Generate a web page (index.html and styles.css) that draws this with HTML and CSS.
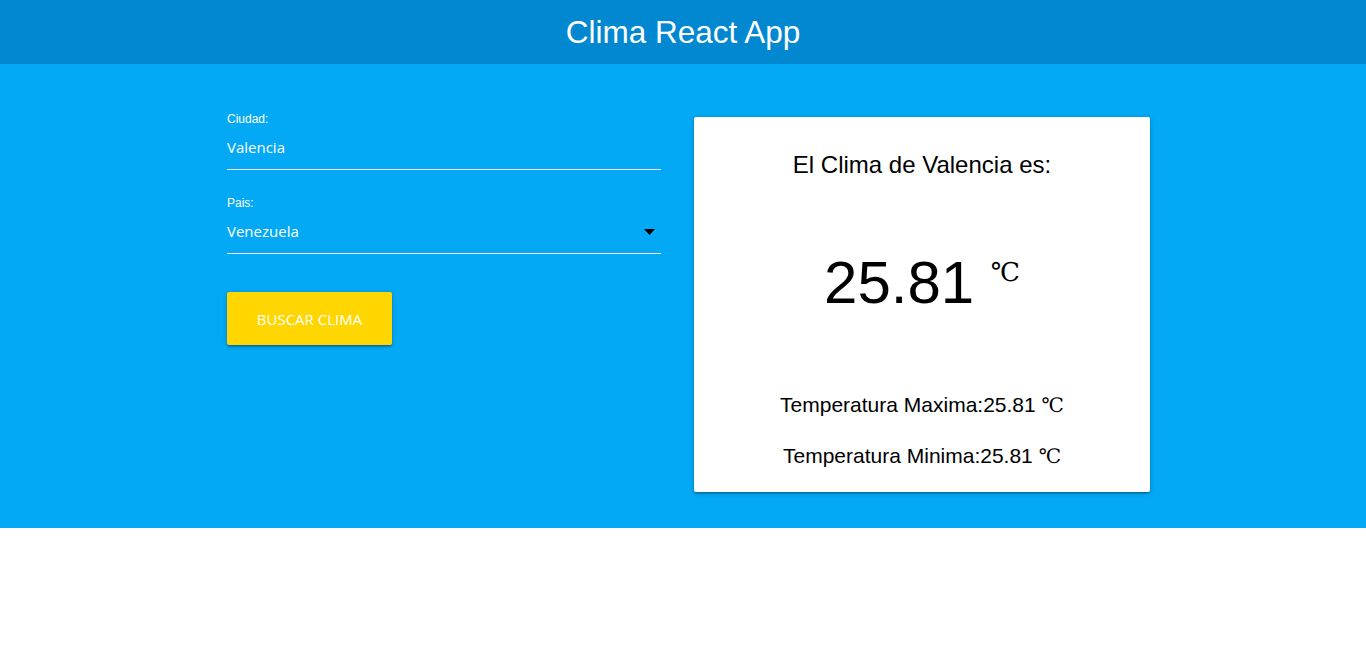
FILE: index.html
```html
<!DOCTYPE html>
<html lang="es">
<head>
<meta charset="utf-8">
<title>Clima React App</title>
<link rel="stylesheet" href="styles.css">
</head>
<body>
<header class="topbar">
  <h1 class="brand">Clima React App</h1>
</header>
<main class="hero">
  <div class="container">
    <div class="col col-form">
      <form class="form">
        <div class="field">
          <label class="field-label" for="ciudad">Ciudad:</label>
          <input class="field-input" id="ciudad" type="text" value="Valencia">
        </div>
        <div class="field">
          <span class="field-label">Pais:</span>
          <div class="field-input select">
            <span>Venezuela</span>
            <svg class="caret" width="11" height="6" viewBox="0 0 11 6"><path d="M0 0 L11 0 L5.5 6 Z" fill="#000"/></svg>
          </div>
        </div>
        <button class="btn" type="button">BUSCAR CLIMA</button>
      </form>
    </div>
    <div class="col col-card">
      <div class="card">
        <h2 class="card-title">El Clima de Valencia es:</h2>
        <p class="temp">25.81 <sup class="unit">&#8451;</sup></p>
        <p class="line">Temperatura Maxima:25.81 <span class="unit-sm">&#8451;</span></p>
        <p class="line line-min">Temperatura Minima:25.81 <span class="unit-sm">&#8451;</span></p>
      </div>
    </div>
  </div>
</main>
</body>
</html>
```
FILE: styles.css
```css
* { box-sizing: border-box; }
html, body { margin: 0; padding: 0; }
body {
  background: #fff;
  font-family: "Liberation Sans", Arial, sans-serif;
  color: #000;
}
.topbar {
  height: 64px;
  background: #0288d1;
  display: flex;
  align-items: center;
  justify-content: center;
}
.brand {
  margin: 0;
  font-family: "Liberation Sans", Arial, sans-serif;
  font-weight: 400;
  font-size: 31.5px;
  line-height: 64px;
  color: #fff;
}
.hero {
  background: #03a9f4;
  height: 464px;
  padding-top: 48px;
}
.container {
  width: 956px;
  margin-left: 205px;
  display: flex;
}
.col { width: 478px; }
.col-form { padding: 0 22px; }
.col-card { padding: 5px 11px 0; }
.form { display: flex; flex-direction: column; }
.field { display: flex; flex-direction: column; margin-bottom: 26px; }
.field-label {
  font-family: "Liberation Sans", Arial, sans-serif;
  font-size: 12px;
  line-height: 14px;
  color: #fff;
  margin-bottom: 10px;
}
.field-input {
  font-family: "Open Sans", sans-serif;
  font-size: 15px;
  line-height: 22px;
  height: 34px;
  color: #fff;
  background: transparent;
  border: 0;
  border-bottom: 1px solid #fff;
  padding: 0 0 11px 0;
  margin: 0;
  outline: none;
  width: 100%;
}
.select {
  display: flex;
  justify-content: space-between;
  align-items: flex-start;
  padding-right: 6px;
}
.caret { margin-top: 9px; }
.btn {
  align-self: flex-start;
  margin-top: 12px;
  width: 165px;
  height: 53px;
  background: #ffd600;
  color: #fff;
  border: 0;
  border-radius: 2px;
  font-family: "Open Sans", sans-serif;
  font-size: 15px;
  letter-spacing: 0;
  box-shadow: 0 2px 2px 0 rgba(0,0,0,0.14), 0 3px 1px -2px rgba(0,0,0,0.12), 0 1px 5px 0 rgba(0,0,0,0.2);
  padding: 0;
}
.card {
  background: #fff;
  border-radius: 2px;
  box-shadow: 0 2px 2px 0 rgba(0,0,0,0.14), 0 3px 1px -2px rgba(0,0,0,0.12), 0 1px 5px 0 rgba(0,0,0,0.2);
  padding: 33px 24px 24px;
  text-align: center;
  height: 375px;
}
.card-title {
  margin: 0;
  font-weight: 400;
  font-size: 24px;
  line-height: 29px;
}
.temp {
  margin: 68px 0 0;
  font-size: 60px;
  line-height: 72px;
}
.unit {
  font-family: "Liberation Serif", "DejaVu Serif", serif;
  font-size: 26px;
  vertical-align: 22px;
  line-height: 0;
  margin-left: 0;
}
.line {
  margin: 74px 0 0;
  font-size: 21px;
  line-height: 24px;
}
.line-min { margin-top: 27px; }
.unit-sm {
  font-family: "Liberation Serif", "DejaVu Serif", serif;
  font-size: 20px;
}
```
